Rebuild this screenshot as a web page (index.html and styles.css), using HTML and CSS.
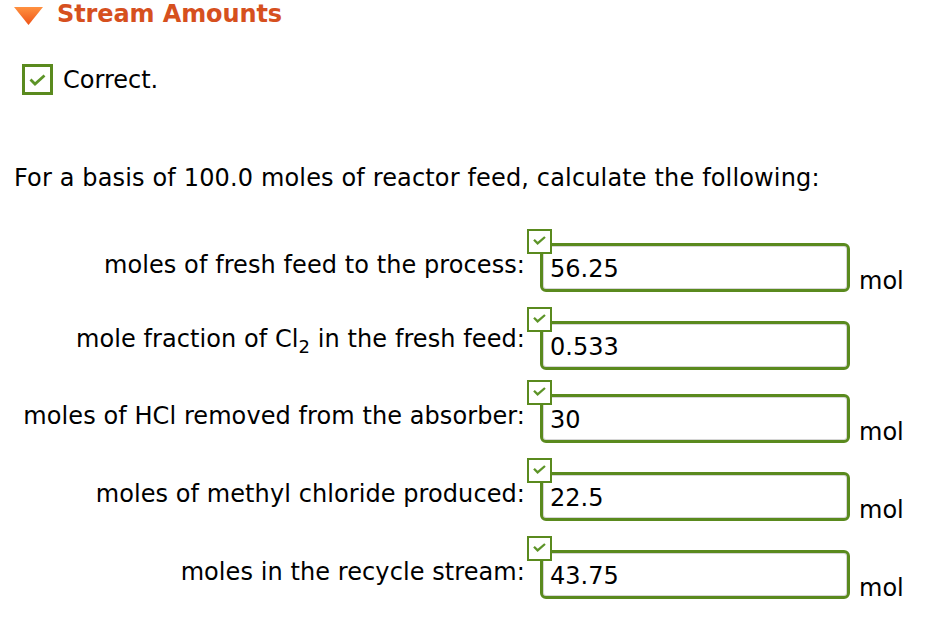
FILE: index.html
```html
<!DOCTYPE html>
<html>
  <head>
    <meta http-equiv="Content-Type" content="text/html; charset=utf-8">
    <title>Stream Amounts</title>
    <link rel="stylesheet" href="styles.css">
  </head>
  <body>
    <div id="wrap">
      <div class="part-head">
        <svg class="toggle" width="29" height="18" viewBox="0 0 29 18">
          <defs>
            <linearGradient id="tri" x1="0" y1="0" x2="0" y2="1">
              <stop offset="0" stop-color="#ff9140"/>
              <stop offset="1" stop-color="#ee5418"/>
            </linearGradient>
          </defs>
          <polygon points="0,0 29,0 14.5,18" fill="url(#tri)"/>
        </svg>
        <span class="part-title">Stream Amounts</span>
      </div>

      <div class="status">
        <span class="check big">
          <svg width="17" height="12" viewBox="0 0 17 12"><path d="M1.5 5.5 L6 10 L15.5 1.5" fill="none" stroke="#5d9427" stroke-width="2.8"/></svg>
        </span>
        <span class="status-text">Correct.</span>
      </div>

      <p class="intro">For a basis of 100.0 moles of reactor feed, calculate the following:</p>

      <div class="answers">
        <div class="row">
          <div class="label">moles of fresh feed to the process:</div>
          <div class="field">
            <span class="check small">
              <svg width="13" height="9" viewBox="0 0 13 9"><path d="M1 3.8 L4.6 7.4 L12 1" fill="none" stroke="#5d9427" stroke-width="2.3"/></svg>
            </span>
            <div class="answer">56.25</div>
          </div>
          <div class="unit">mol</div>
        </div>

        <div class="row no-unit">
          <div class="label">mole fraction of Cl<sub>2</sub> in the fresh feed:</div>
          <div class="field">
            <span class="check small">
              <svg width="13" height="9" viewBox="0 0 13 9"><path d="M1 3.8 L4.6 7.4 L12 1" fill="none" stroke="#5d9427" stroke-width="2.3"/></svg>
            </span>
            <div class="answer">0.533</div>
          </div>
        </div>

        <div class="row">
          <div class="label">moles of HCl removed from the absorber:</div>
          <div class="field">
            <span class="check small">
              <svg width="13" height="9" viewBox="0 0 13 9"><path d="M1 3.8 L4.6 7.4 L12 1" fill="none" stroke="#5d9427" stroke-width="2.3"/></svg>
            </span>
            <div class="answer">30</div>
          </div>
          <div class="unit">mol</div>
        </div>

        <div class="row">
          <div class="label">moles of methyl chloride produced:</div>
          <div class="field">
            <span class="check small">
              <svg width="13" height="9" viewBox="0 0 13 9"><path d="M1 3.8 L4.6 7.4 L12 1" fill="none" stroke="#5d9427" stroke-width="2.3"/></svg>
            </span>
            <div class="answer">22.5</div>
          </div>
          <div class="unit">mol</div>
        </div>

        <div class="row">
          <div class="label">moles in the recycle stream:</div>
          <div class="field">
            <span class="check small">
              <svg width="13" height="9" viewBox="0 0 13 9"><path d="M1 3.8 L4.6 7.4 L12 1" fill="none" stroke="#5d9427" stroke-width="2.3"/></svg>
            </span>
            <div class="answer">43.75</div>
          </div>
          <div class="unit">mol</div>
        </div>
      </div>
    </div>
  </body>
</html>
```

FILE: styles.css
```css
* {
  margin: 0;
  padding: 0;
  box-sizing: border-box;
}
html {
  height: 100%;
}
body {
  background: #fff;
  color: #000;
  font-family: "DejaVu Sans", Verdana, sans-serif;
  font-size: 24px;
  line-height: 28px;
  height: 100%;
}
#wrap {
  padding-left: 14px;
}
.part-head {
  display: flex;
  align-items: flex-start;
  height: 28px;
}
.toggle {
  display: block;
  margin-top: 7px;
  margin-right: 14px;
}
.part-title {
  color: #d6501e;
  font-weight: bold;
  letter-spacing: -0.1px;
}
.status {
  display: flex;
  align-items: center;
  margin-top: 36px;
  margin-left: 8px;
}
.check {
  display: flex;
  align-items: center;
  justify-content: center;
  background: #fff;
  border: 2px solid #5a8a1e;
}
.check.big {
  width: 31px;
  height: 31px;
  border-width: 3px;
  margin-right: 10px;
}
.check.small {
  position: absolute;
  top: 0;
  left: 0;
  z-index: 1;
  width: 25px;
  height: 25px;
  padding-bottom: 3px;
}
.intro {
  margin-top: 69px;
  letter-spacing: 0.15px;
}
.answers {
  margin-top: 37px;
}
.row {
  display: flex;
  align-items: center;
  height: 66px;
  margin-left: -14px;
  margin-bottom: 12px;
}
.row.no-unit {
  height: 61px;
}
.label {
  width: 525px;
  text-align: right;
  margin-right: 2px;
  padding-top: 5px;
  letter-spacing: 0.08px;
}
.label sub {
  font-size: 18px;
  line-height: 1;
}
.field {
  position: relative;
  align-self: flex-start;
  padding: 14px 0 0 13px;
}
.answer {
  width: 310px;
  height: 49px;
  line-height: 43px;
  padding: 2px 0 0 7px;
  border: 3px solid #5a8a1e;
  border-radius: 6px;
  box-shadow: inset 0 0 0 1px #d6d6d6;
  background: #fff;
}
.unit {
  align-self: flex-end;
  margin-left: 9px;
}
```
